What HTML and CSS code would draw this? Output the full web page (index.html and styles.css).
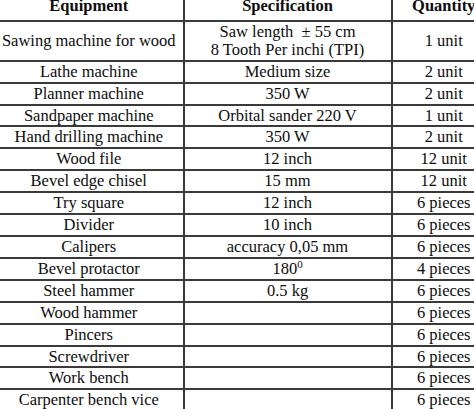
FILE: index.html
```html
<!DOCTYPE html>
<html>
<head>
<meta charset="utf-8">
<link rel="stylesheet" href="styles.css">
</head>
<body>
<table class="equip">
  <colgroup>
    <col class="c1"><col class="c2"><col class="c3">
  </colgroup>
  <thead>
    <tr><th>Equipment</th><th>Specification</th><th>Quantity</th></tr>
  </thead>
  <tbody>
    <tr><td>Sawing machine for wood</td><td>Saw length &nbsp;± 55 cm<br>8 Tooth Per inchi (TPI)</td><td>1 unit</td></tr>
    <tr><td>Lathe machine</td><td>Medium size</td><td>2 unit</td></tr>
    <tr><td>Planner machine</td><td>350 W</td><td>2 unit</td></tr>
    <tr><td>Sandpaper machine</td><td>Orbital sander 220 V</td><td>1 unit</td></tr>
    <tr><td>Hand drilling machine</td><td>350 W</td><td>2 unit</td></tr>
    <tr><td>Wood file</td><td>12 inch</td><td>12 unit</td></tr>
    <tr><td>Bevel edge chisel</td><td>15 mm</td><td>12 unit</td></tr>
    <tr><td>Try square</td><td>12 inch</td><td>6 pieces</td></tr>
    <tr><td>Divider</td><td>10 inch</td><td>6 pieces</td></tr>
    <tr><td>Calipers</td><td>accuracy 0,05 mm</td><td>6 pieces</td></tr>
    <tr><td>Bevel protactor</td><td>180<sup>0</sup></td><td>4 pieces</td></tr>
    <tr><td>Steel hammer</td><td>0.5 kg</td><td>6 pieces</td></tr>
    <tr><td>Wood hammer</td><td></td><td>6 pieces</td></tr>
    <tr><td>Pincers</td><td></td><td>6 pieces</td></tr>
    <tr><td>Screwdriver</td><td></td><td>6 pieces</td></tr>
    <tr><td>Work bench</td><td></td><td>6 pieces</td></tr>
    <tr><td>Carpenter bench vice</td><td></td><td>6 pieces</td></tr>
  </tbody>
</table>
</body>
</html>
```
FILE: styles.css
```css
html, body {
  margin: 0;
  padding: 0;
  background: #ffffff;
  overflow: hidden;
}
body {
  font-family: "Liberation Serif", "Times New Roman", serif;
  font-size: 16.5px;
  color: #0d0d0d;
}
.equip {
  border-collapse: collapse;
  table-layout: fixed;
  width: 502px;
  margin-left: -7px;
  margin-top: -8px;
}
.equip .c1 { width: 189.5px; }
.equip .c2 { width: 208px; }
.equip .c3 { width: 104.5px; }
.equip th,
.equip td {
  border: 2px solid #3a3a3a;
  text-align: center;
  vertical-align: middle;
  line-height: 17.9px;
  padding: 1px 0;
  white-space: nowrap;
}
.equip th {
  font-weight: bold;
  padding-top: 3px;
  padding-bottom: 5px;
}
.equip sup {
  font-size: 11px;
  line-height: 0;
  vertical-align: 6px;
}
```
